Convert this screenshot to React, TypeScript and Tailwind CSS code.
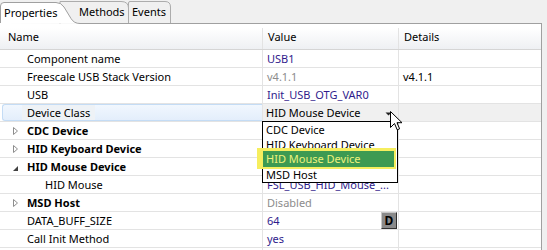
import React from "react";

type Row = {
  name: string;
  bold?: boolean;
  tri?: "closed" | "open";
  indent?: number;
  value?: string;
  vc?: string;
  details?: string;
  dbtn?: boolean;
};

const PURPLE = "text-[#2f1c8c]";
const GRAY = "text-[#8c8c8c]";

const rows: Row[] = [
  { name: "Component name", value: "USB1", vc: PURPLE },
  { name: "Freescale USB Stack Version", value: "v4.1.1", vc: GRAY, details: "v4.1.1" },
  { name: "USB", value: "Init_USB_OTG_VAR0", vc: PURPLE },
];

const rows2: Row[] = [
  { name: "CDC Device", bold: true, tri: "closed" },
  { name: "HID Keyboard Device", bold: true, tri: "closed" },
  { name: "HID Mouse Device", bold: true, tri: "open" },
  { name: "HID Mouse", indent: 45, value: "FSL_USB_HID_Mouse_...", vc: PURPLE },
  { name: "MSD Host", bold: true, tri: "closed", value: "Disabled", vc: GRAY },
  { name: "DATA_BUFF_SIZE", value: "64", vc: PURPLE, dbtn: true },
  { name: "Call Init Method", value: "yes", vc: PURPLE },
];

function Tri({ kind }: { kind: "closed" | "open" }) {
  if (kind === "closed")
    return (
      <svg width="8" height="17" className="absolute left-[12px] top-0">
        <path d="M1.5 5.5 L1.5 12.5 L5.5 9 Z" fill="white" stroke="#8e8e8e" strokeWidth="1" />
      </svg>
    );
  return (
    <svg width="8" height="17" className="absolute left-[12px] top-0">
      <path d="M6 8 L6 13 L1 13 Z" fill="#404040" />
    </svg>
  );
}

function TableRow({ r }: { r: Row }) {
  return (
    <div className="grid grid-cols-[263px_136px_142px] h-[18px] border-b border-[#e3e3e3]">
      <div className="relative border-r border-[#e3e3e3] leading-[17px] whitespace-nowrap">
        {r.tri && <Tri kind={r.tri} />}
        <span
          className={`${r.bold ? "font-bold" : ""} text-black`}
          style={{ paddingLeft: r.indent ?? 27 }}
        >
          {r.name}
        </span>
      </div>
      <div className="relative border-r border-[#e3e3e3] leading-[17px] pl-[4px] whitespace-nowrap flex">
        <span className={r.vc}>{r.value}</span>
        {r.dbtn && (
          <div className="ml-auto mr-[1px] w-[16px] h-[17px] bg-[#8a8a8a] border border-t-[#c8c8c8] border-l-[#c8c8c8] border-r-[#303030] border-b-[#303030] flex items-center justify-center font-bold text-[12px] leading-none text-black">
            D
          </div>
        )}
      </div>
      <div className="leading-[17px] pl-[4px] whitespace-nowrap text-black">{r.details}</div>
    </div>
  );
}

export default function App() {
  return (
    <div
      className="w-[547px] h-[250px] overflow-hidden bg-[#f0f0f0] text-[11px] relative"
      style={{ fontFamily: '"Noto Sans", "Open Sans", sans-serif' }}
    >
      {/* Tab strip */}
      <div className="relative h-[24px]">
        <svg width="547" height="24" className="absolute left-0 top-0">
          <rect x="0" y="0" width="547" height="24" fill="#f0f0f0" />
          <path d="M128.5 24 L128.5 3 Q128.5 1.5 130 1.5 L165 1.5 Q170.5 1.5 170.5 7 L170.5 24" fill="#f0f0f0" stroke="#acacac" />
          <path d="M60 24 L60 1.5 L121 1.5 Q128.5 1.5 128.5 8 L128.5 24" fill="#f0f0f0" stroke="#acacac" />
          <path d="M0.5 24 L0.5 6 Q0.5 2.5 4 2.5 L56 2.5 Q61 2.5 64 7 L71 18.5 Q74 23.5 80 23.5" fill="#ffffff" stroke="#a0a0a0" />
          <rect x="0" y="23" width="1" height="1" fill="#ffffff" />
          <line x1="79" y1="23.5" x2="542" y2="23.5" stroke="#a0a0a0" />
        </svg>
        <div className="relative flex h-[24px] items-start leading-[16px] text-black whitespace-nowrap">
          <span className="w-[79px] pl-[4px] mt-[5px]">Properties</span>
          <span className="w-[53px] mt-[4px]">Methods</span>
          <span className="mt-[4px]">Events</span>
        </div>
      </div>

      {/* Body */}
      <div className="flex h-[226px]">
        <div className="w-[541px] bg-white flex flex-col">
          <div className="h-[4px]" />
          {/* Header */}
          <div className="grid grid-cols-[263px_136px_142px] h-[22px] border-b border-[#d5d5d5] bg-gradient-to-b from-[#ffffff] to-[#eef0f3] leading-[17px] text-black">
            <div className="pl-[8px] border-r border-[#e3e3e3]">Name</div>
            <div className="pl-[5px] border-r border-[#e3e3e3]">Value</div>
            <div className="pl-[5px]">Details</div>
          </div>
          {rows.map((r, i) => (
            <TableRow key={i} r={r} />
          ))}
          {/* Selected row: Device Class */}
          <div className="grid grid-cols-[263px_136px_142px] h-[18px] border-b border-[#e3e3e3]">
            <div className="border-r border-[#e3e3e3] pl-[2px] h-[17px]">
              <div className="h-[17px] rounded-l-[3px] border border-r-0 border-[#c4dcf5] bg-gradient-to-b from-[#f1f7fe] to-[#e3eefb] leading-[15px] pl-[19px] whitespace-nowrap">
                <span className="bg-[#eef2f6] px-[5px] inline-block h-[15px] text-black">Device Class</span>
              </div>
            </div>
            <div className="relative border-r border-[#e3e3e3] bg-[#f0f0f0] leading-[17px] pl-[3px] whitespace-nowrap text-black">
              HID Mouse Device
              <svg width="8" height="6" className="absolute left-[122px] top-[8px]">
                <path d="M0.5 0.5 L6.5 0.5 L3.5 3.5 Z" fill="#202020" />
              </svg>
            </div>
            <div className="bg-[#f0f0f0]" />
          </div>
          {rows2.map((r, i) => (
            <TableRow key={i} r={r} />
          ))}
          <div className="grid grid-cols-[263px_136px_142px] flex-1">
            <div className="border-r border-[#e3e3e3]" />
            <div className="border-r border-[#e3e3e3]" />
            <div />
          </div>
        </div>
        <div className="w-[1px] bg-[#a0a0a0]" />
        <div className="flex-1 bg-[#f0f0f0]" />
      </div>

      {/* Dropdown list */}
      <div className="absolute left-[262px] top-[121px] w-[136px] h-[62px] border border-black bg-white leading-[15px] text-black whitespace-nowrap">
        <div className="h-[15px] pl-[3px]">CDC Device</div>
        <div className="h-[15px] pl-[3px]">HID Keyboard Device</div>
        <div className="h-[15px] pl-[3px]">HID Mouse Device</div>
        <div className="h-[15px] pl-[3px]">MSD Host</div>
      </div>
      {/* Highlighter mark on selected item */}
      <div className="absolute left-[257px] top-[148px] w-[139px] h-[21px] bg-[#f6ee5e] pl-[6px] pt-[3px]">
        <div className="h-[16px] w-[131px] bg-[#3d9a52] leading-[16px] pl-[3px] text-[#eef27c] whitespace-nowrap">
          HID Mouse Device
        </div>
      </div>

      {/* Mouse cursor */}
      <svg width="14" height="22" className="absolute left-[390px] top-[111px]">
        <path d="M0.5 0.5 L0.5 16.5 L4.5 12.5 L7.2 18.8 L9.6 17.8 L7 11.7 L12 11.7 Z" fill="white" stroke="black" strokeWidth="1" strokeLinejoin="round" />
      </svg>
    </div>
  );
}
